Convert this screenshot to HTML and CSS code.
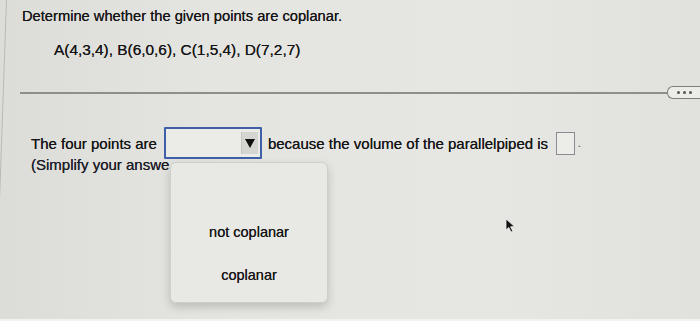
FILE: index.html
```html
<!DOCTYPE html>
<html>
<head>
<meta charset="utf-8">
<link rel="stylesheet" href="styles.css">
</head>
<body>
<div class="page">
  <div class="edge"></div>
  <div class="content">
    <p class="question">Determine whether the given points are coplanar.</p>
    <p class="points">A(4,3,4), B(6,0,6), C(1,5,4), D(7,2,7)</p>
    <div class="divider">
      <div class="rule"></div>
      <div class="more"><span></span><span></span><span></span></div>
    </div>
    <div class="answer">
      <div class="line1">
        <span>The four points are</span>
        <span class="select"><span class="arrow"><svg width="10" height="9" viewBox="0 0 10 9"><path d="M0 0H10L5 9Z" fill="#111"/></svg></span></span>
        <span>because the volume of the parallelpiped is</span>
        <span class="box"></span><span class="dot">.</span>
      </div>
      <div class="line2">(Simplify your answer.)</div>
      <div class="menu">
        <div class="opt">not coplanar</div>
        <div class="opt">coplanar</div>
      </div>
    </div>
  </div>
  <svg class="cursor" width="12" height="16" viewBox="0 0 12 16"><path d="M1 1L1 12L3.8 9.4L6 14L7.8 13.2L5.6 8.8L9.5 8.6Z" fill="#111" stroke="#eee" stroke-width="0.8"/></svg>
  <div class="bottom"></div>
</div>
</body>
</html>
```
FILE: styles.css
```css
html, body {
  margin: 0;
  padding: 0;
}
body {
  width: 700px;
  height: 321px;
  overflow: hidden;
  background: #e3e3e0;
  font-family: "Liberation Sans", Arial, sans-serif;
  color: #141414;
}
.page {
  position: relative;
  width: 700px;
  height: 321px;
  background: linear-gradient(90deg, #dcdcd9 0%, #e4e4e1 30%, #e6e6e3 70%, #e1e1de 100%);
}
.edge {
  position: absolute;
  left: 6px;
  top: 0;
  width: 1px;
  height: 321px;
  background: #b9b9b6;
  transform: skewX(-2deg);
  transform-origin: top;
}
.content {
  padding: 7px 0 0 22px;
}
.question {
  margin: 0;
  font-size: 14.7px;
  line-height: 18px;
  text-shadow: 0 0 0.4px #333;
}
.points {
  margin: 16px 0 0 32px;
  font-size: 15.4px;
  line-height: 18px;
  text-shadow: 0 0 0.4px #333;
}
.divider {
  display: flex;
  align-items: center;
  margin: 27px 0 0 -2px;
}
.rule {
  flex: 1;
  height: 2px;
  background: #8e8e8c;
}
.more {
  display: flex;
  align-items: center;
  gap: 3px;
  padding: 0 8px 0 9px;
  height: 11px;
  border: 1.5px solid #7d7d7b;
  border-right: none;
  border-radius: 6px 0 0 6px;
  background: #ecece9;
}
.more span {
  width: 3px;
  height: 3px;
  background: #555;
  border-radius: 50%;
}
.answer {
  position: relative;
  margin: 27px 0 0 9px;
  font-size: 15px;
  text-shadow: 0 0 0.4px #333;
}
.line1 {
  display: flex;
  align-items: center;
  height: 34px;
}
.select {
  display: flex;
  justify-content: flex-end;
  align-items: center;
  width: 92px;
  height: 28px;
  margin: 0 6px 0 7px;
  border: 2px solid #3f5fa8;
  border-radius: 1px;
  background: #ebebe8;
  padding-right: 2px;
}
.arrow {
  display: flex;
  align-items: center;
  justify-content: center;
  width: 16px;
  height: 22px;
  background: #d5d5d2;
  border-left: 1px solid #c4c4c1;
}
.box {
  width: 17px;
  height: 21px;
  margin-left: 8px;
  border: 1.5px solid #8a8a90;
  background: #ecece9;
}
.dot {
  margin-left: 3px;
  font-size: 10px;
  color: #777;
}
.line2 {
  width: 139px;
  overflow: hidden;
  white-space: nowrap;
  margin-top: -4px;
  line-height: 18px;
  color: #1c1c28;
}
.menu {
  position: absolute;
  left: 139px;
  top: 36px;
  width: 158px;
  height: 141px;
  box-sizing: border-box;
  border-radius: 6px;
  border: 1px solid #cfcfcc;
  background: #e8e8e5;
  box-shadow: 0 4px 10px rgba(0, 0, 0, 0.18);
  display: flex;
  flex-direction: column;
  align-items: center;
  padding-top: 60px;
  gap: 25px;
  font-size: 14.5px;
}
.opt {
  line-height: 18px;
}
.cursor {
  position: absolute;
  left: 505px;
  top: 218px;
}
.bottom {
  position: absolute;
  left: 0;
  bottom: 0;
  width: 700px;
  height: 2px;
  background: #f2f2f0;
}
```
